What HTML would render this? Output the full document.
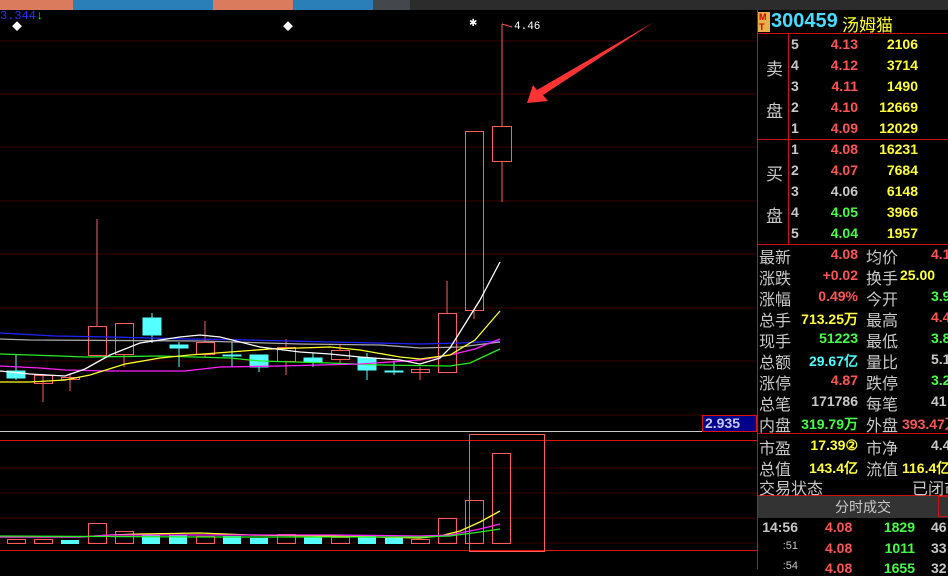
<!DOCTYPE html>
<html><head><meta charset="utf-8"><style>
body{margin:0;width:948px;height:569px;background:#000;overflow:hidden;position:relative;font-family:"Liberation Sans","Noto Sans CJK SC",sans-serif}
.t{position:absolute;white-space:nowrap}
.cn{font-size:16px;color:#c8c8c8;font-family:"Noto Sans CJK SC","WenQuanYi Zen Hei",sans-serif}
.n{font-size:14px;font-weight:bold;font-family:"Liberation Sans",sans-serif}
.r{color:#ff5555}.y{color:#ffff33}.g{color:#44ff44}.w{color:#c8c8c8}.c{color:#44ffff}
.rt{text-align:right}
</style></head><body>
<svg width="948" height="569" style="position:absolute;left:0;top:0" shape-rendering="crispEdges">
<rect x="0" y="0" width="948" height="10" fill="#2c2c2c"/>
<rect x="0" y="0" width="73" height="10" fill="#d97b5c"/>
<rect x="73" y="0" width="140" height="10" fill="#2a7fb8"/>
<rect x="213" y="0" width="80" height="10" fill="#d97b5c"/>
<rect x="293" y="0" width="80" height="10" fill="#2a7fb8"/>
<rect x="373" y="0" width="37" height="10" fill="#44474c"/>
<g stroke="#3c0000" stroke-width="1">
<line x1="0" y1="41" x2="757" y2="41"/><line x1="0" y1="94" x2="757" y2="94"/><line x1="0" y1="147" x2="757" y2="147"/><line x1="0" y1="201" x2="757" y2="201"/><line x1="0" y1="254" x2="757" y2="254"/><line x1="0" y1="308" x2="757" y2="308"/><line x1="0" y1="361" x2="757" y2="361"/><line x1="0" y1="415" x2="702" y2="415"/>
<line x1="0" y1="468" x2="757" y2="468"/><line x1="0" y1="493" x2="757" y2="493"/><line x1="0" y1="518" x2="757" y2="518"/><line x1="0" y1="543" x2="757" y2="543"/>
</g>
<line x1="0" y1="431.5" x2="757" y2="431.5" stroke="#c8c8c8"/>
<line x1="0" y1="440.5" x2="757" y2="440.5" stroke="#dd1111"/>
<line x1="0" y1="550.5" x2="757" y2="550.5" stroke="#dd1111"/>
<rect x="702.5" y="415.5" width="54" height="16" fill="#000088" stroke="#dd1111"/>
<g stroke="#ff5c5c" fill="none" stroke-width="1">
<line x1="43" y1="375" x2="43" y2="402"/><rect x="34.5" y="375.5" width="18" height="8"/>
<line x1="70" y1="373" x2="70" y2="391"/><rect x="61.5" y="377.5" width="18" height="2"/>
<line x1="97" y1="219" x2="97" y2="326"/><rect x="88.5" y="326.5" width="18" height="29"/>
<line x1="124" y1="354" x2="124" y2="367"/><rect x="115.5" y="323.5" width="18" height="31"/>
<line x1="205" y1="321" x2="205" y2="342"/><line x1="205" y1="354" x2="205" y2="358"/><rect x="196.5" y="342.5" width="18" height="12"/>
<line x1="286" y1="339" x2="286" y2="347"/><line x1="286" y1="361" x2="286" y2="375"/><rect x="277.5" y="347.5" width="18" height="14"/>
<line x1="340" y1="345" x2="340" y2="350"/><line x1="340" y1="359" x2="340" y2="363"/><rect x="331.5" y="350.5" width="18" height="9"/>
<line x1="420" y1="367" x2="420" y2="380"/><rect x="411.5" y="369.5" width="18" height="3"/>
<line x1="447" y1="281" x2="447" y2="313"/><rect x="438.5" y="313.5" width="18" height="59"/>
<line x1="474" y1="310" x2="474" y2="319"/><rect x="465.5" y="131.5" width="18" height="179"/>
<line x1="502" y1="24" x2="502" y2="126"/><line x1="502" y1="161" x2="502" y2="202"/><rect x="492.5" y="126.5" width="19" height="35"/>
<line x1="502" y1="24" x2="512" y2="27"/>
</g>
<g fill="#55ffff" stroke="#55ffff">
<line x1="16" y1="355" x2="16" y2="380"/><rect x="7" y="371" width="18" height="7"/>
<line x1="152" y1="313" x2="152" y2="343"/><rect x="143" y="318" width="18" height="17"/>
<line x1="179" y1="342" x2="179" y2="367"/><rect x="170" y="345" width="18" height="3"/>
<line x1="232" y1="342" x2="232" y2="367"/><rect x="223" y="355" width="18" height="1"/>
<line x1="259" y1="355" x2="259" y2="372"/><rect x="250" y="355" width="18" height="12"/>
<line x1="313" y1="353" x2="313" y2="367"/><rect x="304" y="358" width="18" height="4"/>
<line x1="367" y1="353" x2="367" y2="380"/><rect x="358" y="358" width="18" height="12"/>
<line x1="394" y1="361" x2="394" y2="375"/><rect x="385" y="371" width="18" height="1"/>
</g>
<g fill="none" stroke-width="1.3" shape-rendering="auto">
<polyline stroke="#2222ff" points="0,333 55,336 110,337 190,339 250,340 330,342 420,344 460,343 500,341"/>
<polyline stroke="#aaaaaa" points="0,339 30,340 200,341 300,344 380,345 420,348 460,347 500,342"/>
<polyline stroke="#22ee22" points="0,354 60,356 85,357 160,356 230,358 260,361 330,363 380,365 450,366 470,363 500,349"/>
<polyline stroke="#ff22ff" points="0,366 40,368 65,370 110,371 185,371 220,367 280,366 360,364 420,360 450,355 475,349 500,339"/>
<polyline stroke="#ffff22" points="0,382 30,382 65,380 90,375 125,364 160,358 190,355 230,352 270,349 330,347 360,350 400,357 420,359 450,355 475,340 500,311"/>
<polyline stroke="#ffffff" points="0,371 30,374 65,376 85,369 110,355 140,343 180,337 200,335 220,337 260,347 300,352 330,354 360,357 400,360 420,364 440,358 450,348 480,300 500,262"/>
</g>
<g stroke="#ff5c5c" fill="none">
<rect x="7.5" y="539.5" width="18" height="4"/><rect x="34.5" y="539.5" width="18" height="4"/>
<rect x="88.5" y="523.5" width="18" height="20"/><rect x="115.5" y="531.5" width="18" height="12"/>
<rect x="196.5" y="536.5" width="18" height="7"/><rect x="277.5" y="534.5" width="18" height="9"/>
<rect x="331.5" y="537.5" width="18" height="6"/><rect x="411.5" y="539.5" width="18" height="4"/>
<rect x="438.5" y="518.5" width="18" height="25"/><rect x="465.5" y="500.5" width="18" height="43"/>
<rect x="492.5" y="453.5" width="18" height="90"/>
<rect x="469.5" y="434.5" width="75" height="117"/>
</g>
<g fill="#55ffff">
<rect x="61" y="540" width="18" height="4"/><rect x="142" y="535" width="18" height="9"/><rect x="169" y="535" width="18" height="9"/>
<rect x="223" y="536" width="18" height="8"/><rect x="250" y="538" width="18" height="6"/><rect x="304" y="537" width="18" height="7"/>
<rect x="358" y="536" width="18" height="8"/><rect x="385" y="538" width="18" height="6"/>
</g>
<g fill="none" stroke-width="1.3" shape-rendering="auto">
<polyline stroke="#ffff22" points="0,537 80,537 110,535 140,534 200,533 250,535 330,536 420,538 440,536 460,531 480,522 500,511"/>
<polyline stroke="#ff22ff" points="0,537 80,537 110,535 200,535 330,535 420,536 450,535 480,529 500,524"/>
<polyline stroke="#22ee22" points="0,536 200,537 420,537 450,536 480,532 500,529"/>
</g>
<polygon points="654,22 543,95 548,101 527,103 533,85 537,90" fill="#ff3333" shape-rendering="auto"/>
<g stroke="#cc1111">
<line x1="757.5" y1="10" x2="757.5" y2="569"/>
<line x1="758" y1="33.5" x2="948" y2="33.5"/><line x1="758" y1="139.5" x2="948" y2="139.5"/><line x1="758" y1="244.5" x2="948" y2="244.5"/>
<line x1="788.5" y1="34" x2="788.5" y2="244"/>
<line x1="758" y1="433.5" x2="948" y2="433.5"/>
<line x1="758" y1="495.5" x2="948" y2="495.5"/>
</g>
<rect x="758" y="496" width="190" height="22" fill="#333"/>
<rect x="938.5" y="496.5" width="12" height="20" fill="none" stroke="#cc1111"/>
<rect x="758" y="12" width="12" height="20" fill="#e8b048"/>
</svg>
<div class="t n" style="left:0;top:9px;color:#2233ff;font-weight:normal;font-family:'Liberation Mono',monospace;font-size:12px">3.344<span style="color:#22ff22">↓</span></div>
<div class="t" style="left:12px;top:18px;color:#fff;font-size:10px">◆</div>
<div class="t" style="left:283px;top:18px;color:#fff;font-size:10px">◆</div>
<div class="t" style="left:469px;top:18px;color:#fff;font-size:10px">✱</div>
<div class="t" style="left:514px;top:21px;color:#fff;font-size:11px;font-family:'Liberation Mono',monospace">4.46</div>
<div class="t n" style="left:705px;top:415px;color:#c8c8ff">2.935</div>
<div class="t" style="left:759px;top:12px;color:#cc0000;font-size:9px;font-weight:bold;line-height:10px">M<br>T</div>
<div class="t" style="left:771px;top:10px;color:#44ddff;font-size:20px;font-weight:bold">300459</div>
<div class="t cn" style="left:842px;top:11px;color:#ffff33;font-size:17px">汤姆猫</div>
<div class="t cn" style="left:766px;top:55px;font-size:17px">卖</div><div class="t cn" style="left:766px;top:97px;font-size:17px">盘</div>
<div class="t cn" style="left:766px;top:160px;font-size:17px">买</div><div class="t cn" style="left:766px;top:202px;font-size:17px">盘</div>
<div id="ob"></div>
<script>
var rows=[["5","4.13","r","2106"],["4","4.12","r","3714"],["3","4.11","r","1490"],["2","4.10","r","12669"],["1","4.09","r","12029"],["1","4.08","r","16231"],["2","4.07","r","7684"],["3","4.06","w","6148"],["4","4.05","g","3966"],["5","4.04","g","1957"]];
var h="";rows.forEach(function(r,i){var y=36+i*21;h+='<div class="t n w" style="left:791px;top:'+y+'px">'+r[0]+'</div><div class="t n rt '+r[2]+'" style="left:800px;width:58px;top:'+y+'px">'+r[1]+'</div><div class="t n y rt" style="left:860px;width:58px;top:'+y+'px">'+r[3]+'</div>';});
var s=[["最新","4.08","r","均价","4.1","r"],["涨跌","+0.02","r","换手","25.00","y"],["涨幅","0.49%","r","今开","3.9","g"],["总手","713.25万","y","最高","4.4","r"],["现手","51223","g","最低","3.8","g"],["总额","29.67亿","c","量比","5.1","w"],["涨停","4.87","r","跌停","3.2","g"],["总笔","171786","w","每笔","41","w"],["内盘","319.79万","g","外盘","393.47万","r"],["市盈","17.39②","y","市净","4.4","w"],["总值","143.4亿","y","流值","116.4亿","y"]];
s.forEach(function(r,i){var y=244+i*21+(i>8?2:0);h+='<div class="t cn" style="left:759px;top:'+y+'px">'+r[0]+'</div><div class="t n rt '+r[2]+'" style="left:770px;width:88px;top:'+(y+2)+'px">'+r[1]+'</div><div class="t cn" style="left:866px;top:'+y+'px">'+r[3]+'</div><div class="t n '+r[5]+'" style="left:'+(r[4].length>5?902:(r[4].length>3?900:931))+'px;top:'+(y+2)+'px">'+r[4]+'</div>';});
h+='<div class="t cn" style="left:759px;top:475px">交易状态</div><div class="t cn" style="left:912px;top:475px">已闭市</div>';
h+='<div class="t cn" style="left:835px;top:497px;font-size:14px">分时成交</div>';
var tr=[["14:56","1829","46"],[":51","1011","33"],[":54","1655","32"]];
tr.forEach(function(r,i){var y=519+i*20.5;h+='<div class="t n w rt" style="left:760px;width:38px;top:'+y+'px;'+(i?'font-weight:normal;font-size:11px':'')+'">'+r[0]+'</div><div class="t n r" style="left:825px;top:'+y+'px">4.08</div><div class="t n g rt" style="left:860px;width:55px;top:'+y+'px">'+r[1]+'</div><div class="t n w" style="left:931px;top:'+y+'px">'+r[2]+'</div>';});
document.getElementById("ob").innerHTML=h;
</script>
</body></html>
